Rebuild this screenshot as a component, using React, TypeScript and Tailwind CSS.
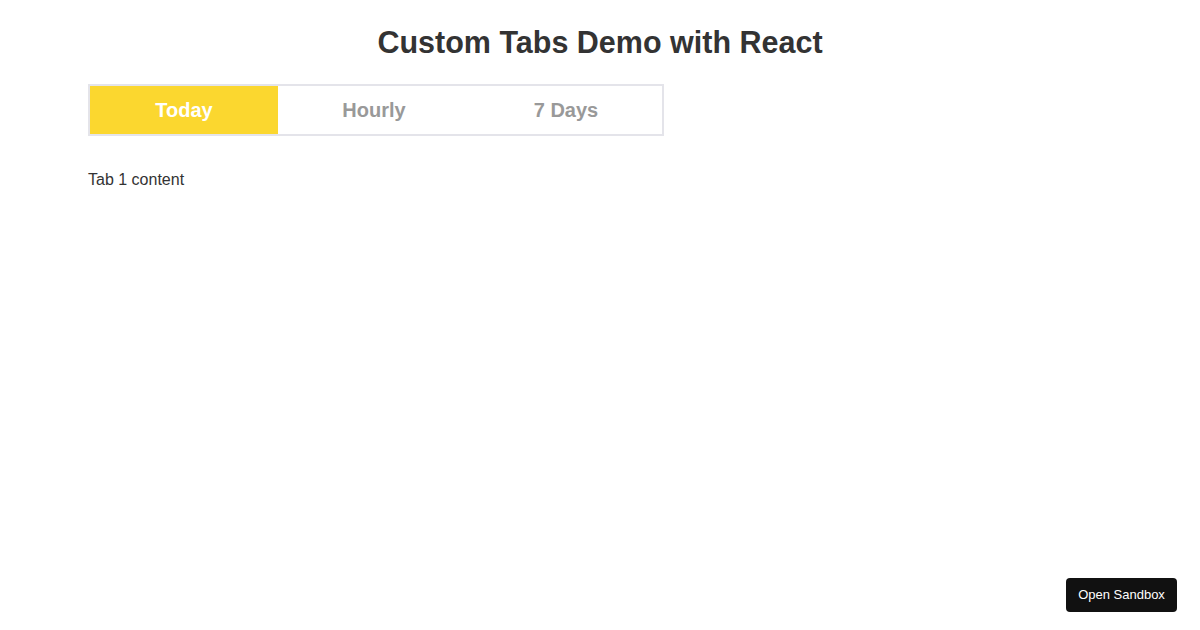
export default function App() {
  const tabs = ["Today", "Hourly", "7 Days"];
  return (
    <div className="min-h-[630px] bg-white relative" style={{ fontFamily: '"Liberation Sans", Arial, sans-serif' }}>
      <div className="w-[1024px] mx-auto pt-[22px]">
        <h1 className="text-center text-[30.5px] leading-[40px] font-bold text-[#333]">Custom Tabs Demo with React</h1>
        <div className="mt-[22px] w-[576px] border-2 border-[#e4e4ea] flex">
          {tabs.map((t, i) => (
            <div
              key={t}
              className={
                i === 0
                  ? "w-[188px] h-[48px] flex items-center justify-center bg-[#fbd72f] text-white text-[20px] font-bold"
                  : "flex-1 h-[48px] flex items-center justify-center text-[#999] text-[20px] font-bold"
              }
            >
              {t}
            </div>
          ))}
        </div>
        <p className="mt-[34px] text-[16px] leading-[20px] text-[#333]">Tab 1 content</p>
      </div>
      <div className="absolute right-[23px] bottom-[18px] w-[111px] h-[34px] bg-[#111] rounded-[4px] flex items-center justify-center text-[13px] text-white">
        Open Sandbox
      </div>
    </div>
  );
}
